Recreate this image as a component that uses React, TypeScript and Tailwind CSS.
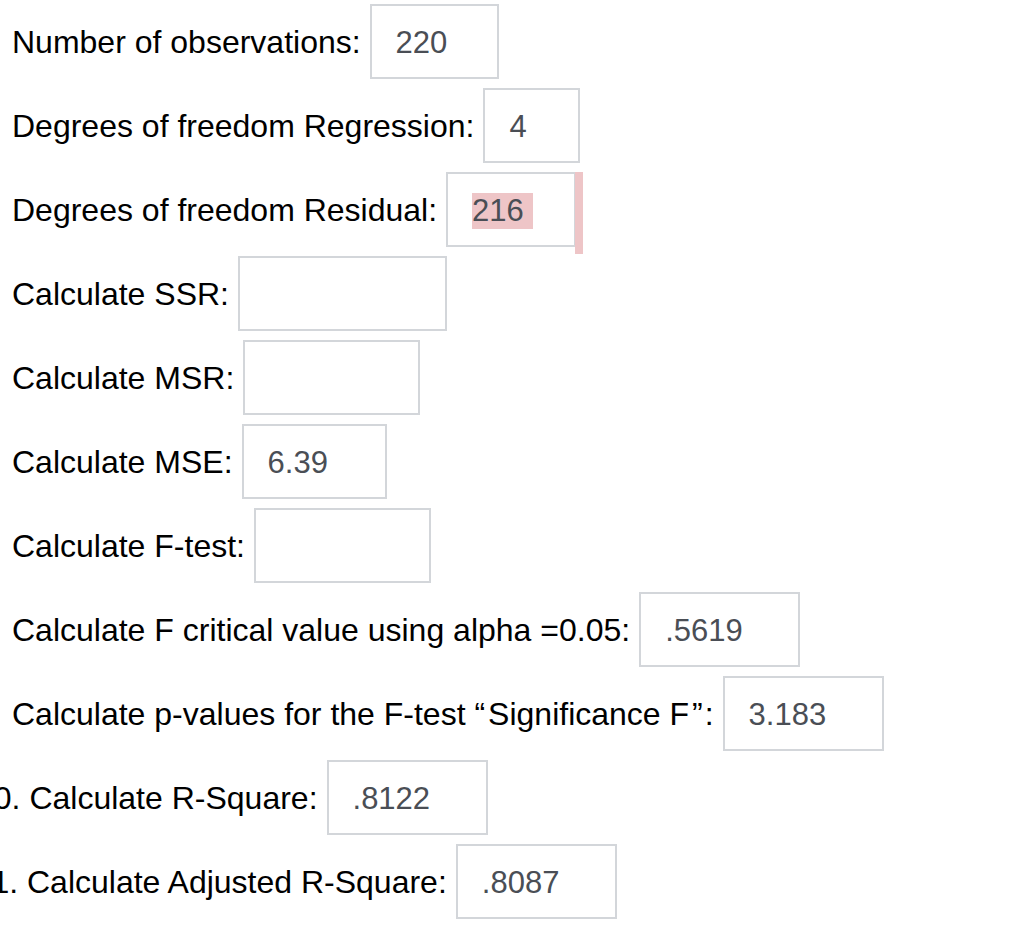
import React from "react";

interface Row {
  num: number;
  label: React.ReactNode;
  value: string;
  width: number;
  selected?: boolean;
}

const rows: Row[] = [
  { num: 1, label: "Number of observations:", value: "220", width: 129 },
  { num: 2, label: "Degrees of freedom Regression:", value: "4", width: 97 },
  { num: 3, label: "Degrees of freedom Residual:", value: "216", width: 130, selected: true },
  { num: 4, label: "Calculate SSR:", value: "", width: 209 },
  { num: 5, label: "Calculate MSR:", value: "", width: 177 },
  { num: 6, label: "Calculate MSE:", value: "6.39", width: 145 },
  { num: 7, label: "Calculate F-test:", value: "", width: 177 },
  { num: 8, label: "Calculate F critical value using alpha =0.05:", value: ".5619", width: 161 },
  {
    num: 9,
    label: (
      <>
        Calculate p-values for the F-test <span className="mr-[3px]">{"\u201c"}</span>Significance F
        <span className="ml-[3px] mr-[2px]">{"\u201d"}</span>:
      </>
    ),
    value: "3.183",
    width: 161,
  },
  { num: 10, label: "Calculate R-Square:", value: ".8122", width: 161 },
  { num: 11, label: "Calculate Adjusted R-Square:", value: ".8087", width: 161 },
];

const App = () => {
  return (
    <div
      className="min-h-[934px] w-[1024px] overflow-hidden bg-white pl-[12px] pt-[4px] text-[32px] text-black"
      style={{ fontFamily: '"Liberation Sans", Arial, sans-serif' }}
    >
      {rows.map((row) => (
        <div key={row.num} className="mb-[9px] flex h-[75px] items-center whitespace-nowrap">
          <span className={row.num >= 10 ? "-ml-[36px]" : ""}>
            {row.num >= 10 ? `${row.num}. ` : ""}
            {row.label}
          </span>
          {/* answer box */}
          <div
            className="relative ml-[9px] flex h-[75px] shrink-0 items-center border-2 border-[#d3d6da] pl-[24px] pt-[3px] text-[31px] text-[#4a4e55]"
            style={{ width: row.width }}
          >
            {row.selected ? (
              <>
                <span className="bg-[#eec5c7] pr-[9px] leading-[36px]">{row.value}</span>
                <span className="absolute left-[calc(100%+1px)] top-[-2px] h-[82px] w-[8px] bg-[#eec5c7]" />
              </>
            ) : (
              <span>{row.value}</span>
            )}
          </div>
        </div>
      ))}
    </div>
  );
};

export default App;
